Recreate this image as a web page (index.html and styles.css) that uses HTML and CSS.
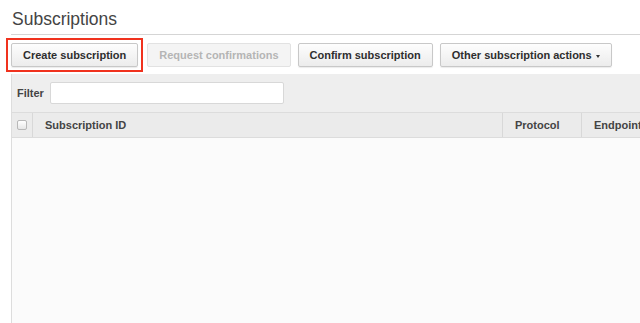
FILE: index.html
```html
<!DOCTYPE html>
<html lang="en">
<head>
  <meta charset="UTF-8" />
  <meta name="viewport" content="width=device-width, initial-scale=1.0"/>
  <title>Subscriptions</title>
  <link rel="stylesheet" href="styles.css">
</head>
<body>

<div class="page">
  <h1 class="title">Subscriptions</h1>

  <!-- Actions -->
  <div class="actions">
    <span class="highlight"><button class="btn">Create subscription</button></span>
    <button class="btn" disabled>Request confirmations</button>
    <button class="btn">Confirm subscription</button>
    <button class="btn">Other subscription actions <span class="caret"></span></button>
  </div>

  <!-- Table -->
  <div class="panel">
    <div class="filter-bar">
      <label class="filter-label">Filter</label>
      <input class="filter-input" type="text">
    </div>
    <div class="table-head">
      <div class="col col-check"><span class="checkbox"></span></div>
      <div class="col col-id">Subscription ID</div>
      <div class="col col-protocol">Protocol</div>
      <div class="col col-endpoint">Endpoint</div>
    </div>
    <div class="table-body"></div>
  </div>
</div>

</body>
</html>
```

FILE: styles.css
```css
body {
  margin: 0;
  padding: 0;
  font-family: "Liberation Sans", Arial, sans-serif;
  background: #fff;
  color: #444;
  overflow: hidden;
}

.page {
  padding-left: 11px;
  width: 700px;
}

.title {
  margin: 0;
  padding: 9px 0 0 1px;
  height: 25px;
  font-size: 17.5px;
  font-weight: normal;
  color: #444;
  border-bottom: 1px solid #d5d5d5;
}

.actions {
  display: flex;
  align-items: center;
  gap: 7px;
  padding: 8px 0 7px;
}

.btn {
  height: 24px;
  padding: 0 11px;
  font-family: inherit;
  font-size: 11px;
  font-weight: bold;
  color: #2e2e2e;
  border: 1px solid #c8c8c8;
  border-radius: 2px;
  background: linear-gradient(#fdfdfd, #ececec);
  box-shadow: 0 1px 1px rgba(0, 0, 0, 0.08);
}

.btn:disabled {
  color: #b5b5b5;
  border-color: #e2e2e2;
  background: #f4f4f4;
  box-shadow: none;
}

.highlight {
  display: flex;
  margin: -5px -3px -5px -5px;
  padding: 3px;
  border: 2px solid #f0321e;
}

.caret {
  display: inline-block;
  margin-left: 1px;
  vertical-align: middle;
  border-left: 2.5px solid transparent;
  border-right: 2.5px solid transparent;
  border-top: 3px solid #333;
}

.panel {
  border-left: 1px solid #ddd;
}

.filter-bar {
  display: flex;
  align-items: center;
  height: 38px;
  padding-left: 5px;
  background: #eeeeee;
  border-bottom: 1px solid #dcdcdc;
}

.filter-label {
  font-size: 11px;
  font-weight: bold;
  color: #444;
  margin-right: 6px;
}

.filter-input {
  width: 232px;
  height: 20px;
  padding: 0;
  border: 1px solid #d8d8d8;
  border-radius: 2px;
  background: #fff;
}

.table-head {
  display: flex;
  height: 24px;
  background: #ebebeb;
  border-bottom: 1px solid #dcdcdc;
}

.col {
  display: flex;
  align-items: center;
  font-size: 11px;
  font-weight: bold;
  color: #444;
  border-right: 1px solid #d8d8d8;
}

.col-check {
  width: 20px;
  justify-content: center;
}

.checkbox {
  width: 8px;
  height: 8px;
  border: 1px solid #b8b8b8;
  border-radius: 2px;
  background: linear-gradient(#fff, #e6e6e6);
}

.col-id {
  width: 457px;
  padding-left: 12px;
}

.col-protocol {
  width: 66px;
  padding-left: 12px;
}

.col-endpoint {
  padding-left: 12px;
  border-right: none;
}

.table-body {
  height: 200px;
  background: #fbfbfb;
}
```
